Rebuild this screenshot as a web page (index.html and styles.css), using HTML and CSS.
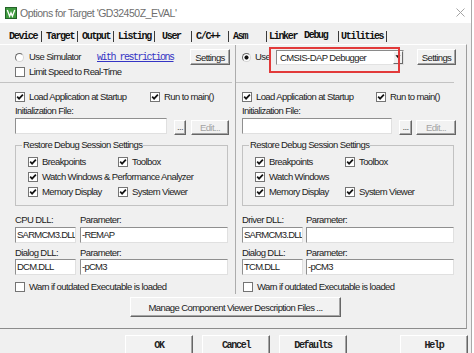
FILE: index.html
```html
<!DOCTYPE html>
<html lang="en">
<head>
<meta charset="utf-8">
<title>Options for Target</title>
<link rel="stylesheet" href="styles.css">
</head>
<body>
<div class="window">
  <div class="titlebar">
    <svg class="appicon" viewBox="0 0 12 12"><rect x="0.5" y="0.5" width="11" height="11" fill="#3f9b3f" stroke="#24632a"/><path d="M2.3 3 L4.6 9.2 L6 5.8 L7.4 9.2 L9.7 3" fill="none" stroke="#fff" stroke-width="1.3"/></svg>
    <span class="title">Options for Target 'GD32450Z_EVAL'</span>
    <svg class="close" viewBox="0 0 9 9"><path d="M0.5 0.5 L8.5 8.5 M8.5 0.5 L0.5 8.5" stroke="#a4a4a4" stroke-width="1"/></svg>
  </div>

  <div class="tabs">
    <span class="tab tab-first">Device</span>
    <span class="tab">Target</span>
    <span class="tab">Output</span>
    <span class="tab">Listing</span>
    <span class="tab tab-user">User</span>
    <span class="tab">C/C++</span>
    <span class="tab">Asm</span>
    <span class="tab tab-plain">Linker</span>
    <span class="tab tab-active">Debug</span>
    <span class="tab tab-tight">Utilities</span>
  </div>

  <div class="panel">
    <div class="cols">
      <!-- LEFT: simulator -->
      <div class="col col-left">
        <div class="top top-left">
          <div class="sim-row sim-left">
            <label class="opt"><span class="radio"></span>Use Simulator</label>
            <span class="link">with restrictions</span>
            <span class="btn btn-settings">Settings</span>
          </div>
          <div class="row">
            <label class="opt"><svg class="cb" viewBox="0 0 10 10"><rect x="0.5" y="0.5" width="9" height="9" fill="#fff" stroke="#747474"/></svg>Limit Speed to Real-Time</label>
          </div>
        </div>
        <div class="load-row load-left">
          <label class="opt"><svg class="cb" viewBox="0 0 10 10"><rect x="0.5" y="0.5" width="9" height="9" fill="#fff" stroke="#747474"/><path d="M2.2 4.6 L4.1 6.7 L7.9 2.6" fill="none" stroke="#111" stroke-width="1.7"/></svg>Load Application at Startup</label>
          <label class="opt"><svg class="cb" viewBox="0 0 10 10"><rect x="0.5" y="0.5" width="9" height="9" fill="#fff" stroke="#747474"/><path d="M2.2 4.6 L4.1 6.7 L7.9 2.6" fill="none" stroke="#111" stroke-width="1.7"/></svg>Run to main()</label>
        </div>
        <div class="lbl init-lbl">Initialization File:</div>
        <div class="file-row file-left">
          <div class="input file-input"></div>
          <span class="btn btn-dots">...</span>
          <span class="btn btn-edit">Edit...</span>
        </div>
        <fieldset class="group group-left">
          <legend>Restore Debug Session Settings</legend>
          <div class="grp-grid">
            <label class="opt"><svg class="cb" viewBox="0 0 10 10"><rect x="0.5" y="0.5" width="9" height="9" fill="#fff" stroke="#747474"/><path d="M2.2 4.6 L4.1 6.7 L7.9 2.6" fill="none" stroke="#111" stroke-width="1.7"/></svg>Breakpoints</label>
            <label class="opt"><svg class="cb" viewBox="0 0 10 10"><rect x="0.5" y="0.5" width="9" height="9" fill="#fff" stroke="#747474"/><path d="M2.2 4.6 L4.1 6.7 L7.9 2.6" fill="none" stroke="#111" stroke-width="1.7"/></svg>Toolbox</label>
            <label class="opt span2"><svg class="cb" viewBox="0 0 10 10"><rect x="0.5" y="0.5" width="9" height="9" fill="#fff" stroke="#747474"/><path d="M2.2 4.6 L4.1 6.7 L7.9 2.6" fill="none" stroke="#111" stroke-width="1.7"/></svg>Watch Windows &amp; Performance Analyzer</label>
            <label class="opt"><svg class="cb" viewBox="0 0 10 10"><rect x="0.5" y="0.5" width="9" height="9" fill="#fff" stroke="#747474"/><path d="M2.2 4.6 L4.1 6.7 L7.9 2.6" fill="none" stroke="#111" stroke-width="1.7"/></svg>Memory Display</label>
            <label class="opt"><svg class="cb" viewBox="0 0 10 10"><rect x="0.5" y="0.5" width="9" height="9" fill="#fff" stroke="#747474"/><path d="M2.2 4.6 L4.1 6.7 L7.9 2.6" fill="none" stroke="#111" stroke-width="1.7"/></svg>System Viewer</label>
          </div>
        </fieldset>
        <div class="dll-labels dll-labels-left first"><span>CPU DLL:</span><span>Parameter:</span></div>
        <div class="dll-row dll-left first"><div class="input">SARMCM3.DLL</div><div class="input">-REMAP</div></div>
        <div class="dll-labels dll-labels-left second"><span>Dialog DLL:</span><span>Parameter:</span></div>
        <div class="dll-row dll-left second"><div class="input">DCM.DLL</div><div class="input">-pCM3</div></div>
        <div class="warn-row">
          <label class="opt"><svg class="cb" viewBox="0 0 10 10"><rect x="0.5" y="0.5" width="9" height="9" fill="#fff" stroke="#747474"/></svg>Warn if outdated Executable is loaded</label>
        </div>
      </div>

      <!-- RIGHT: target debugger -->
      <div class="col col-right">
        <div class="top top-right">
          <div class="sim-row sim-right">
            <label class="opt opt-use"><span class="radio radio-on"></span>Use</label>
            <div class="combo"><span class="combo-text">CMSIS-DAP Debugger</span><span class="combo-arrow"><svg viewBox="0 0 7 4"><path d="M0.5 0 L6.5 0 L3.5 3.5 Z" fill="#111"/></svg></span></div>
            <span class="btn btn-settings btn-settings-right">Settings</span>
          </div>
          <div class="row"></div>
        </div>
        <div class="load-row load-right">
          <label class="opt"><svg class="cb" viewBox="0 0 10 10"><rect x="0.5" y="0.5" width="9" height="9" fill="#fff" stroke="#747474"/><path d="M2.2 4.6 L4.1 6.7 L7.9 2.6" fill="none" stroke="#111" stroke-width="1.7"/></svg>Load Application at Startup</label>
          <label class="opt"><svg class="cb" viewBox="0 0 10 10"><rect x="0.5" y="0.5" width="9" height="9" fill="#fff" stroke="#747474"/><path d="M2.2 4.6 L4.1 6.7 L7.9 2.6" fill="none" stroke="#111" stroke-width="1.7"/></svg>Run to main()</label>
        </div>
        <div class="lbl init-lbl">Initialization File:</div>
        <div class="file-row file-right">
          <div class="input file-input"></div>
          <span class="btn btn-dots">...</span>
          <span class="btn btn-edit">Edit...</span>
        </div>
        <fieldset class="group group-right">
          <legend>Restore Debug Session Settings</legend>
          <div class="grp-grid">
            <label class="opt"><svg class="cb" viewBox="0 0 10 10"><rect x="0.5" y="0.5" width="9" height="9" fill="#fff" stroke="#747474"/><path d="M2.2 4.6 L4.1 6.7 L7.9 2.6" fill="none" stroke="#111" stroke-width="1.7"/></svg>Breakpoints</label>
            <label class="opt"><svg class="cb" viewBox="0 0 10 10"><rect x="0.5" y="0.5" width="9" height="9" fill="#fff" stroke="#747474"/><path d="M2.2 4.6 L4.1 6.7 L7.9 2.6" fill="none" stroke="#111" stroke-width="1.7"/></svg>Toolbox</label>
            <label class="opt span2"><svg class="cb" viewBox="0 0 10 10"><rect x="0.5" y="0.5" width="9" height="9" fill="#fff" stroke="#747474"/><path d="M2.2 4.6 L4.1 6.7 L7.9 2.6" fill="none" stroke="#111" stroke-width="1.7"/></svg>Watch Windows</label>
            <label class="opt"><svg class="cb" viewBox="0 0 10 10"><rect x="0.5" y="0.5" width="9" height="9" fill="#fff" stroke="#747474"/><path d="M2.2 4.6 L4.1 6.7 L7.9 2.6" fill="none" stroke="#111" stroke-width="1.7"/></svg>Memory Display</label>
            <label class="opt"><svg class="cb" viewBox="0 0 10 10"><rect x="0.5" y="0.5" width="9" height="9" fill="#fff" stroke="#747474"/><path d="M2.2 4.6 L4.1 6.7 L7.9 2.6" fill="none" stroke="#111" stroke-width="1.7"/></svg>System Viewer</label>
          </div>
        </fieldset>
        <div class="dll-labels dll-labels-right first"><span>Driver DLL:</span><span>Parameter:</span></div>
        <div class="dll-row dll-right first"><div class="input">SARMCM3.DLL</div><div class="input"></div></div>
        <div class="dll-labels dll-labels-right second"><span>Dialog DLL:</span><span>Parameter:</span></div>
        <div class="dll-row dll-right second"><div class="input">TCM.DLL</div><div class="input">-pCM3</div></div>
        <div class="warn-row warn-right">
          <label class="opt"><svg class="cb" viewBox="0 0 10 10"><rect x="0.5" y="0.5" width="9" height="9" fill="#fff" stroke="#747474"/></svg>Warn if outdated Executable is loaded</label>
        </div>
      </div>
    </div>
    <div class="manage-row"><span class="btn btn-manage">Manage Component Viewer Description Files ...</span></div>
  </div>

  <div class="footer">
    <span class="btn fbtn">OK</span>
    <span class="btn fbtn">Cancel</span>
    <span class="btn fbtn">Defaults</span>
    <span class="btn fbtn fbtn-help">Help</span>
  </div>

  <div class="highlight"></div>
</div>
</body>
</html>
```

FILE: styles.css
```css
* { box-sizing: border-box; }
html, body { margin: 0; padding: 0; }
body {
  width: 474px;
  height: 353px;
  overflow: hidden;
  background: #ffffff;
  font-family: "Liberation Sans", Arial, sans-serif;
  font-size: 9.5px;
  letter-spacing: -0.6px;
  color: #1c1c1c;
}

.window {
  position: relative;
  width: 472px;
  height: 353px;
  background: #f0f0f0;
  border-right: 1px solid #a9a9a9;
}

/* title bar */
.titlebar {
  height: 23px;
  background: #ffffff;
  display: flex;
  align-items: center;
  padding-left: 5px;
}
.appicon { width: 12px; height: 12px; margin-top: 2px; flex: none; }
.title {
  margin-left: 3px;
  font-size: 10.5px;
  letter-spacing: -0.5px;
  line-height: 12px;
  padding-top: 2px;
  color: #6e6e6e;
}
.close { width: 9px; height: 9px; margin-left: auto; margin-right: 6px; margin-top: 1px; }

/* tabs */
.tabs {
  display: grid;
  grid-template-columns: 42px 36px 36px 41px 37px 37px 38px 33px 39px 48px;
  padding: 8px 0 2px;
  font-family: "Liberation Mono", "Courier New", monospace;
  font-weight: bold;
  font-size: 10px;
  letter-spacing: -1.3px;
  color: #111;
}
.tab {
  height: 11px;
  line-height: 11px;
  padding-left: 4px;
  border-right: 1px solid #3a3a3a;
  white-space: nowrap;
}
.tab-first { padding-left: 9px; }
.tab-user { padding-left: 7px; }
.tab-plain { padding-left: 2px; border-right: 0; }
.tab-tight { padding-left: 2px; }
.tab-active { line-height: 9px; }

/* panel */
.panel {
  width: 467px;
  border-top: 1px solid #ffffff;
  border-right: 1px solid #9c9c9c;
  border-bottom: 1px solid #8c8c8c;
  padding-bottom: 11px;
}
.cols {
  display: grid;
  grid-template-columns: 235px 231px;
}
.col { padding-top: 4px; padding-bottom: 2px; }
.col-left { padding-left: 15px; }
.col-right {
  padding-left: 6px;
  border-left: 1px solid #acacac;
}

.top {
  padding-bottom: 5px;
  border-bottom: 1px solid #c3c3c3;
}
.top-left { margin-left: -15px; padding-left: 15px; margin-right: 3px; }
.top-right { margin-left: -6px; padding-left: 6px; margin-right: 12px; }

.row { height: 10px; margin-top: 2px; }

.opt {
  display: flex;
  align-items: center;
  gap: 4px;
  height: 10px;
  line-height: 10px;
  white-space: nowrap;
}
.cb { width: 10px; height: 10px; flex: none; }
.radio {
  width: 9px;
  height: 9px;
  flex: none;
  border-radius: 50%;
  border: 1px solid;
  border-color: #6a6a6a #d6d6d6 #d6d6d6 #6a6a6a;
  background: #ffffff;
  margin-right: 1px;
}
.radio-on {
  background: radial-gradient(circle, #111 0 1.7px, #ffffff 2.4px);
  margin-right: 0;
}

.sim-row {
  display: grid;
  align-items: center;
  height: 16px;
}
.sim-left { grid-template-columns: 82px 93px 40px; }
.sim-right { grid-template-columns: 34px 141px 39px; }
.link {
  font-family: "Liberation Mono", "Courier New", monospace;
  font-size: 10px;
  letter-spacing: -1.5px;
  color: #3434c4;
  text-decoration: underline;
  white-space: nowrap;
}

/* buttons */
.btn {
  display: flex;
  align-items: center;
  justify-content: center;
  background: #f2f2f2;
  border: 1px solid;
  border-color: #ffffff #666666 #666666 #ffffff;
  box-shadow: inset -1px -1px 0 #a5a5a5;
  white-space: nowrap;
  color: #1c1c1c;
}
.btn-settings { height: 16px; width: 40px; }
.btn-settings-right { width: 39px; }

.combo {
  width: 128px;
  height: 15px;
  display: flex;
  background: #ffffff;
  border: 1px solid;
  border-color: #8a8a8a #e2e2e2 #e2e2e2 #8a8a8a;
}
.combo-text { padding-left: 3px; line-height: 13px; }
.combo-arrow {
  margin-left: auto;
  width: 10px;
  display: flex;
  align-items: center;
  justify-content: center;
  background: #f0f0f0;
  border: 1px solid;
  border-color: #ffffff #6a6a6a #6a6a6a #ffffff;
}
.combo-arrow svg { width: 6px; height: 4px; }

.load-row {
  display: grid;
  margin-top: 9px;
  height: 10px;
}
.load-left { grid-template-columns: 135px auto; }
.load-right { grid-template-columns: 134px auto; }

.lbl { line-height: 10px; height: 10px; }
.init-lbl { margin-top: 4px; }

.file-row {
  display: flex;
  align-items: flex-start;
  margin-top: 2px;
  height: 16px;
}
.input {
  height: 16px;
  background: #ffffff;
  border: 1px solid;
  border-color: #8f8f8f #e0e0e0 #e0e0e0 #8f8f8f;
  padding-left: 1px;
  line-height: 14px;
  letter-spacing: -0.75px;
  white-space: nowrap;
  overflow: hidden;
}
.file-left .file-input { width: 152px; }
.file-right .file-input { width: 150px; }
.btn-dots {
  height: 15px;
  margin-top: 2px;
  margin-left: 7px;
  align-items: flex-end;
  padding-bottom: 2px;
  color: #555;
}
.file-left .btn-dots { width: 12px; }
.file-right .btn-dots { width: 13px; }
.btn-edit {
  height: 15px;
  margin-top: 2px;
  color: #a3a3a3;
}
.file-left .btn-edit { width: 38px; margin-left: 5px; }
.file-right .btn-edit { width: 40px; margin-left: 4px; }

/* group box */
.group {
  margin: 6px 0 0;
  min-width: 0;
  border: 1px solid #c2c2c2;
  padding: 7px 0 8px 12px;
}
.group-left { width: 213px; }
.group-right { width: 212px; }
.group legend {
  padding: 0 1px;
  margin-left: -6px;
  line-height: 10px;
  height: 10px;
}
.grp-grid {
  display: grid;
  grid-template-columns: 90px auto;
  row-gap: 5px;
}
.span2 { grid-column: 1 / 3; }

/* DLL rows */
.dll-labels {
  display: grid;
  line-height: 10px;
  height: 10px;
}
.dll-labels.first { margin-top: 9px; }
.dll-labels.second { margin-top: 5px; }
.dll-labels-left { grid-template-columns: 65px auto; }
.dll-labels-right { grid-template-columns: 64px auto; }
.dll-row {
  display: grid;
  grid-template-columns: 61px 148px;
  height: 16px;
}
.dll-row.first { margin-top: 2px; }
.dll-row.second { margin-top: 1px; }
.dll-left { column-gap: 4px; }
.dll-right { column-gap: 3px; }

.warn-row { margin-top: 7px; height: 10px; }
.warn-right { padding-left: 1px; }

/* manage button */
.manage-row {
  display: flex;
  padding-left: 130px;
  margin-top: 3px;
}
.btn-manage { width: 211px; height: 20px; }

/* footer */
.footer {
  display: flex;
  gap: 9px;
  padding: 6px 3px 0 125px;
}
.fbtn {
  width: 68px;
  height: 20px;
  font-family: "Liberation Mono", "Courier New", monospace;
  font-weight: bold;
  font-size: 10px;
  letter-spacing: -1.3px;
  color: #222;
}
.fbtn-help { margin-left: auto; }

/* red annotation frame over the debugger selector */
.highlight {
  position: absolute;
  left: 269px;
  top: 47px;
  width: 131px;
  height: 26px;
  border: 2px solid #e23a3a;
}
```
